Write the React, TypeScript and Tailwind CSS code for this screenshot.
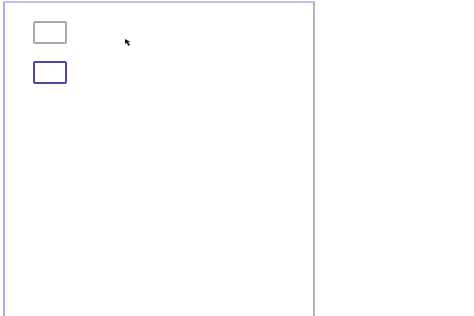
import React from "react";

export default function App() {
  return (
    <div className="w-[474px] h-[316px] bg-white overflow-hidden">
      <div className="relative ml-[3px] mt-[1px] w-[312px] h-[330px] border-l-2 border-t-2 border-r-2 border-l-[#aeabe4] border-t-[#c2bff0] border-r-[#b4b4b8] bg-white">
        <div className="flex flex-col gap-[17px] pl-[28px] pt-[18px]">
          <div className="w-[34px] h-[23px] border-2 border-[#a8a8a8] rounded-[2px] bg-white" />
          <div className="w-[34px] h-[23px] border-2 border-[#4b489e] rounded-[2px] bg-white" />
        </div>
        <svg
          className="absolute left-[119px] top-[35px]"
          width="9"
          height="9"
          viewBox="0 0 9 9"
        >
          <path d="M1 1 L1 6 L2.5 4.8 L4.5 8 L6 7 L4.2 4 L6.5 4 Z" fill="#111" />
        </svg>
      </div>
    </div>
  );
}
